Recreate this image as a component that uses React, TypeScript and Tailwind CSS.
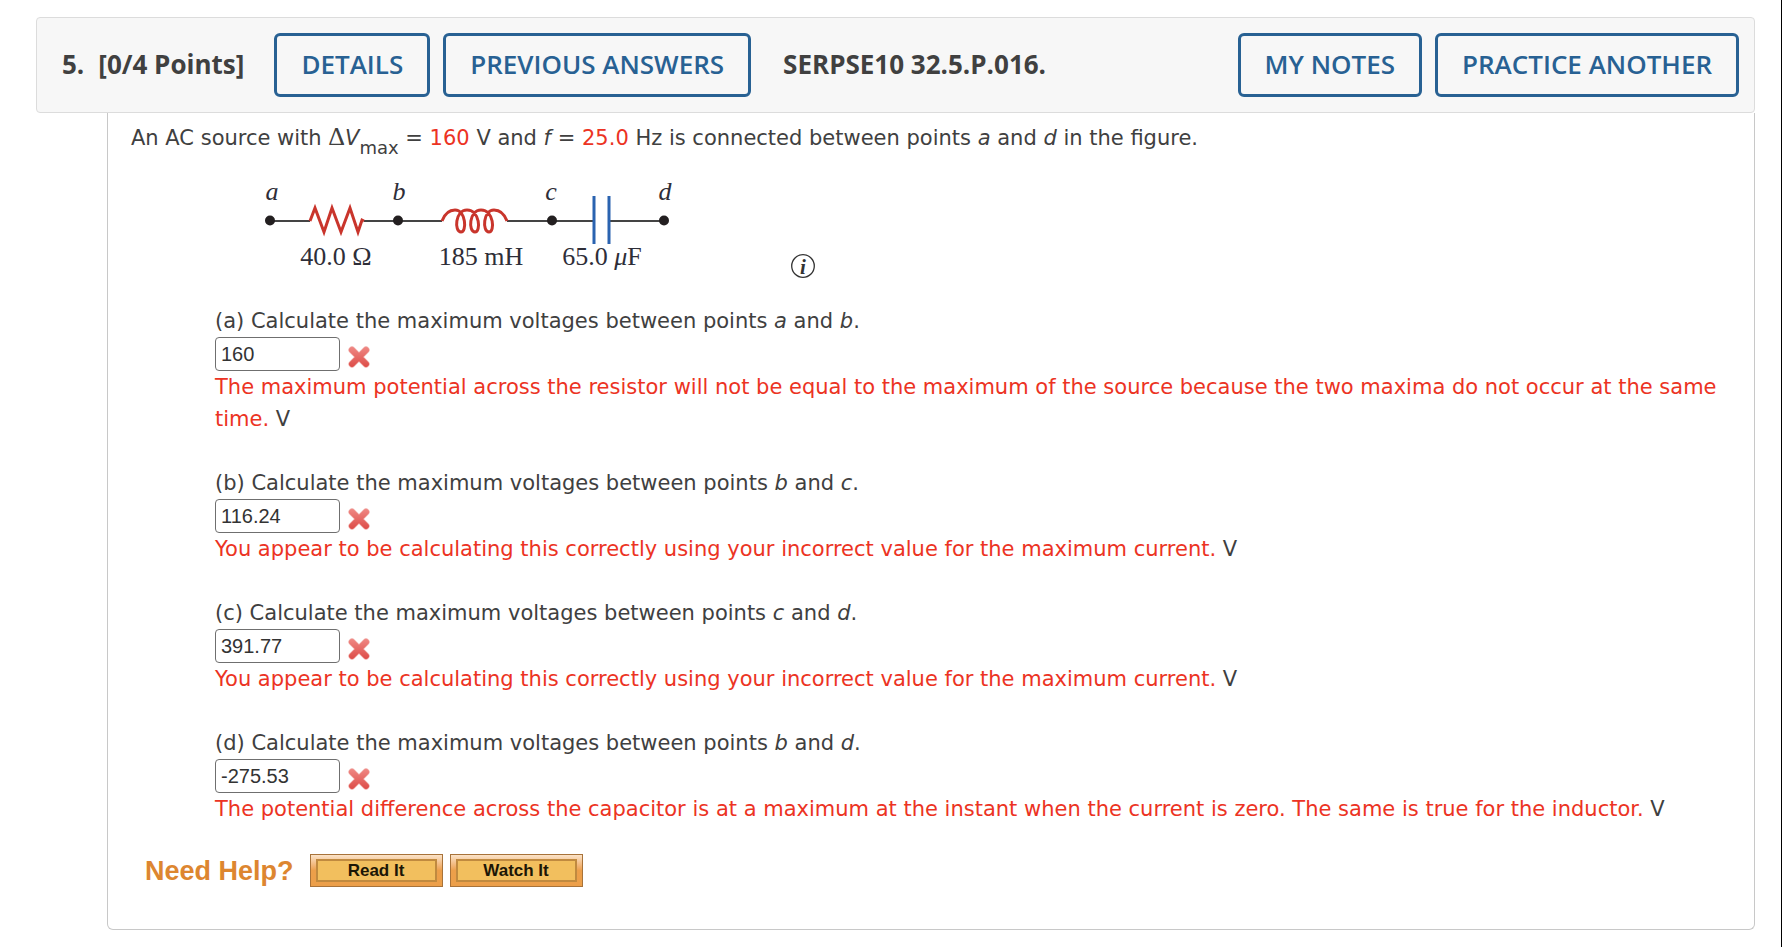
import React from "react";

const resistor =
  "M50 53 L55 40 L64 64 L72 40 L81 64 L90 40 L98 64 L102 52 L104 53";

const inductor =
  "M182 53 C185 45 190 42 195 42 C206 42 207 64 201 64 C194 64 195 42 207 42 C220 42 221 64 215 64 C208 64 209 42 221 42 C234 42 235 64 229 64 C222 64 223 42 234 42 C240 42 244 45 247 53";

function Circuit() {
  return (
    <svg width="420" height="104" viewBox="0 0 420 104" role="img" aria-label="Series circuit" className="mb-[6px] shrink-0">
      <g stroke="#444" strokeWidth="2">
        <path d="M10 53H50M104 53H182M247 53H334M349 53H404" />
      </g>
      <path d={resistor} fill="none" stroke="#c9352c" strokeWidth="3" />
      <path d={inductor} fill="none" stroke="#c9352c" strokeWidth="3" />
      <path d="M334 28V76M349 28V76" stroke="#2a63b0" strokeWidth="3" />
      <g fill="#231f20">
        <circle cx="10" cy="52.500" r="5" />
        <circle cx="138" cy="52.500" r="5" />
        <circle cx="292" cy="52.500" r="5" />
        <circle cx="404" cy="52.500" r="5" />
      </g>
      <g fill="#2e2e38" fontFamily="Liberation Serif, serif" fontSize="26" textAnchor="middle">
        <g fontStyle="italic">
          <text x="12" y="32">a</text>
          <text x="139" y="32">b</text>
          <text x="291" y="32">c</text>
          <text x="405" y="32">d</text>
        </g>
        <text x="76" y="97">40.0 Ω</text>
        <text x="221" y="97">185 mH</text>
        <text x="342" y="97">65.0 <tspan fontStyle="italic">μ</tspan>F</text>
      </g>
    </svg>
  );
}

function InfoIcon() {
  return (
    <svg width="24" height="24" viewBox="0 0 24 24" aria-hidden="true">
      <circle cx="12" cy="12" r="11.3" fill="#fff" stroke="#333" strokeWidth="1.3" />
      <text x="12" y="20" textAnchor="middle" fontFamily="Liberation Serif, serif" fontSize="21" fontStyle="italic" fontWeight="700" fill="#333">i</text>
    </svg>
  );
}

function WrongIcon() {
  return (
    <svg width="22" height="22" viewBox="0 0 22 22" role="img" aria-label="Incorrect">
      <defs>
        <linearGradient id="wrong" x1="0" y1="0" x2="0" y2="22" gradientUnits="userSpaceOnUse">
          <stop offset="0" stopColor="#f08a86" />
          <stop offset="1" stopColor="#dc4a45" />
        </linearGradient>
      </defs>
      <path d="M4 4L18 18M18 4L4 18" fill="none" stroke="#f0a5a1" strokeWidth="7" strokeLinecap="round" />
      <path d="M4 4L18 18M18 4L4 18" fill="none" stroke="url(#wrong)" strokeWidth="5.8" strokeLinecap="round" />
    </svg>
  );
}

function HeaderButton({ children }: { children: React.ReactNode }) {
  return (
    <button type="button" className="h-16 whitespace-nowrap rounded-md border-3 border-[#286193] px-6 pb-px text-[26px] font-semibold text-[#286193]">
      {children}
    </button>
  );
}

function HelpButton({ children }: { children: React.ReactNode }) {
  return (
    <button type="button" className="h-[33px] w-[133px] border border-[#a8733a] bg-linear-to-b from-[#fbe3c8] to-[#ec9f4a] to-50% px-[5px] py-1">
      <span className="flex h-full items-center justify-center border-2 border-[#c08a3f] bg-[#f2bf5e] pt-px text-[17px] font-bold text-[#1c1606]">
        {children}
      </span>
    </button>
  );
}

type Part = { id: string; from: string; to: string; value: string; feedback: string };

const parts: Part[] = [
  { id: "a", from: "a", to: "b", value: "160", feedback: "The maximum potential across the resistor will not be equal to the maximum of the source because the two maxima do not occur at the same time." },
  { id: "b", from: "b", to: "c", value: "116.24", feedback: "You appear to be calculating this correctly using your incorrect value for the maximum current." },
  { id: "c", from: "c", to: "d", value: "391.77", feedback: "You appear to be calculating this correctly using your incorrect value for the maximum current." },
  { id: "d", from: "b", to: "d", value: "-275.53", feedback: "The potential difference across the capacitor is at a maximum at the instant when the current is zero. The same is true for the inductor." },
];

function Question({ part }: { part: Part }) {
  return (
    <div>
      <label htmlFor={`part-${part.id}`} className="block">
        ({part.id}) Calculate the maximum voltages between points <i>{part.from}</i> and <i>{part.to}</i>.
      </label>
      <div className="flex h-[34px] items-center gap-2">
        <input
          id={`part-${part.id}`}
          type="text"
          defaultValue={part.value}
          className="h-[34px] w-[125px] rounded border border-[#6f6f6f] bg-white px-[5px] font-['Liberation_Sans',Arial,sans-serif] text-xl text-[#333]"
        />
        <span className="pt-[6px]">
          <WrongIcon />
        </span>
      </div>
      <p>
        <span className="text-[#ec3323]">{part.feedback}</span> V
      </p>
    </div>
  );
}

export default function App() {
  return (
    <div className="min-h-screen border-r border-black bg-white pt-[17px] pr-[26px] pb-4 pl-9 text-[#404040]">
      <header className="flex min-h-24 items-center rounded border border-[#dcdcdc] bg-[#f7f7f7] pr-[15px] pl-[25px] font-['Open_Sans',sans-serif] text-[26px] font-bold">
        <h2 className="flex gap-[14px] pb-px whitespace-nowrap">
          <span>5.</span>
          <span>[0/4 Points]</span>
        </h2>
        <div className="ml-[30px] flex gap-[13px]">
          <HeaderButton>DETAILS</HeaderButton>
          <HeaderButton>PREVIOUS ANSWERS</HeaderButton>
        </div>
        <span className="ml-8 pb-px whitespace-nowrap">SERPSE10 32.5.P.016.</span>
        <div className="ml-auto flex gap-[13px]">
          <HeaderButton>MY NOTES</HeaderButton>
          <HeaderButton>PRACTICE ANOTHER</HeaderButton>
        </div>
      </header>

      <main className="ml-[71px] rounded-b-md border border-t-0 border-[#c8c8c8] pt-[9px] pr-6 pb-[42px] pl-[23px] font-['DejaVu_Sans',Verdana,sans-serif] text-[21px] leading-8">
        <p className="h-[46px]">
          An AC source with <span className="font-['Liberation_Serif',serif] text-[26px] leading-none">Δ</span>
          <i>V</i>
          <span className="align-[-9px] text-[18px] leading-none">max</span> = <span className="text-[#ec3323]">160</span> V and <i>f</i> ={" "}
          <span className="text-[#ec3323]">25.0</span> Hz is connected between points <i>a</i> and <i>d</i> in the figure.
        </p>
        <div className="flex items-end pl-[129px]">
          <Circuit />
          <button type="button" aria-label="Figure information" className="ml-[111px]">
            <InfoIcon />
          </button>
        </div>
        <div className="mt-[27px] flex flex-col gap-8 pl-[84px]">
          {parts.map((part) => (
            <Question key={part.id} part={part} />
          ))}
        </div>
        <div className="mt-[29px] flex items-center pl-[14px] font-['Liberation_Sans',Arial,sans-serif]">
          <strong className="mr-4 text-[27px] text-[#dd8630]">Need Help?</strong>
          <div className="flex gap-[7px]">
            <HelpButton>Read It</HelpButton>
            <HelpButton>Watch It</HelpButton>
          </div>
        </div>
      </main>
    </div>
  );
}
